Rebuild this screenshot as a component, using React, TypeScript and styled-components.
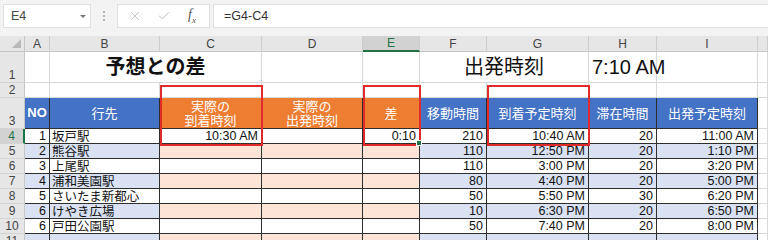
import React from "react";
import styled, { createGlobalStyle, css } from "styled-components";
import { X, Check } from "lucide-react";

const GlobalStyle = createGlobalStyle`
  html, body {
    margin: 0;
    padding: 0;
    background: #fff;
  }
  body {
    font-family: "Liberation Sans", "Noto Sans CJK JP", sans-serif;
    overflow: hidden;
  }
`;

const Window = styled.div`
  width: 768px;
  height: 240px;
  overflow: hidden;
  background: #fff;
`;

const FormulaBar = styled.div`
  display: flex;
  align-items: flex-start;
  height: 36px;
  padding: 4px 0 0 3px;
  box-sizing: border-box;
  background: #f3f3f3;
`;

const NameBox = styled.div`
  width: 88px;
  height: 24px;
  box-sizing: border-box;
  display: flex;
  align-items: center;
  justify-content: space-between;
  padding: 0 4px 0 7px;
  background: #fff;
  border: 1px solid #e0e0e0;
  font-size: 12.5px;
  color: #444;
`;

const Caret = styled.span`
  width: 0;
  height: 0;
  border-left: 3px solid transparent;
  border-right: 3px solid transparent;
  border-top: 3px solid #777;
`;

const Dots = styled.div`
  width: 26px;
  height: 24px;
  display: flex;
  flex-direction: column;
  align-items: center;
  justify-content: center;
  gap: 2px;

  span {
    width: 2px;
    height: 2px;
    background: #b5b5b5;
  }
`;

const FuncBox = styled.div`
  width: 93px;
  height: 24px;
  box-sizing: border-box;
  display: flex;
  align-items: center;
  background: #fff;
  border: 1px solid #e0e0e0;
  padding-left: 10px;
  gap: 15px;
  color: #b8b8b8;
`;

const Fx = styled.span`
  font-family: "Liberation Serif", serif;
  font-style: italic;
  font-size: 14px;
  color: #555;
  margin-left: 2px;

  sub {
    font-size: 9px;
  }
`;

const FormulaInput = styled.div`
  flex: 1;
  height: 24px;
  box-sizing: border-box;
  margin-left: 3px;
  display: flex;
  align-items: center;
  padding-left: 10px;
  background: #fff;
  border: 1px solid #e0e0e0;
  border-right: none;
  font-size: 12.5px;
  color: #333;
`;

const sheetTemplate = css`
  display: grid;
  grid-template-columns: 25px 25px 110px 102px 101px 57px 67px 102px 68px 101px 1fr;
  grid-template-rows: 16px 31px 15px 31px repeat(8, 15px);
`;

const SheetWrap = styled.div`
  position: relative;
`;

const Sheet = styled.div`
  ${sheetTemplate}
`;

const Overlay = styled.div`
  ${sheetTemplate}
  position: absolute;
  inset: 0;
  pointer-events: none;
`;

const Corner = styled.div`
  background: #e6e6e6;
  border-right: 1px solid #c6c6c6;
  border-bottom: 1px solid #c6c6c6;
  display: flex;
  align-items: flex-end;
  justify-content: flex-end;
  padding: 0 3px 3px 0;

  span {
    width: 0;
    height: 0;
    border-left: 9px solid transparent;
    border-bottom: 9px solid #b9b9b9;
  }
`;

const ColHead = styled.div<{ $active?: boolean }>`
  display: flex;
  align-items: center;
  justify-content: center;
  background: ${(p) => (p.$active ? "#d2d2d2" : "#e6e6e6")};
  color: ${(p) => (p.$active ? "#217346" : "#444")};
  border-right: 1px solid #cdcdcd;
  border-bottom: ${(p) => (p.$active ? "2px solid #217346" : "1px solid #c6c6c6")};
  box-sizing: border-box;
  font-size: 12px;
`;

const RowHead = styled.div<{ $active?: boolean }>`
  display: flex;
  align-items: flex-end;
  justify-content: center;
  box-sizing: border-box;
  background: ${(p) => (p.$active ? "#d2d2d2" : "#e6e6e6")};
  color: ${(p) => (p.$active ? "#217346" : "#444")};
  border-right: ${(p) => (p.$active ? "2px solid #217346" : "1px solid #c6c6c6")};
  border-bottom: 1px solid #d4d4d4;
  font-size: 12px;
  line-height: 14px;
`;

const Blank = styled.div<{ $span?: number }>`
  grid-column: span ${(p) => p.$span || 1};
  border-right: 1px solid #d9d9d9;
  border-bottom: 1px solid #d9d9d9;
  box-sizing: border-box;
`;

const Title = styled.div<{ $span?: number; $bold?: boolean; $align?: string }>`
  grid-column: span ${(p) => p.$span || 1};
  display: flex;
  align-items: flex-end;
  justify-content: ${(p) => p.$align || "center"};
  padding: 0 3px 2px;
  border-right: 1px solid #d9d9d9;
  border-bottom: 1px solid #d9d9d9;
  box-sizing: border-box;
  font-family: "Liberation Sans", "Noto Sans CJK JP", sans-serif;
  font-size: 20px;
  font-weight: ${(p) => (p.$bold ? 700 : 400)};
  line-height: 26px;
  color: #111;
  white-space: nowrap;
`;

const TH = styled.div<{ $tone: "blue" | "orange"; $bold?: boolean }>`
  display: flex;
  align-items: center;
  justify-content: center;
  text-align: center;
  background: ${(p) => (p.$tone === "blue" ? "#4472c4" : "#ed7d31")};
  color: #fff;
  border-right: 1px solid #2e2e2e;
  border-bottom: 1px solid #2e2e2e;
  box-sizing: border-box;
  font-family: ${(p) =>
    p.$bold ? '"Liberation Sans", sans-serif' : '"Noto Sans CJK JP", sans-serif'};
  font-size: 13px;
  font-weight: ${(p) => (p.$bold ? 700 : 400)};
  line-height: 14px;
  white-space: pre-line;
`;

const TD = styled.div<{ $bg: string; $align?: "left" | "right" }>`
  display: flex;
  align-items: center;
  justify-content: ${(p) => (p.$align === "left" ? "flex-start" : "flex-end")};
  padding: 0 3px 0 2px;
  background: ${(p) => p.$bg};
  border-right: 1px solid #2e2e2e;
  border-bottom: 1px solid #2e2e2e;
  box-sizing: border-box;
  font-family: ${(p) =>
    p.$align === "left"
      ? '"Noto Sans CJK JP", sans-serif'
      : '"Liberation Sans", "Noto Sans CJK JP", sans-serif'};
  font-size: 12.5px;
  line-height: 14px;
  color: #111;
  white-space: nowrap;
`;

const Highlight = styled.div<{ $col: number }>`
  grid-column: ${(p) => p.$col};
  grid-row: 3 / 6;
  margin: 2px -1px -2px 0;
  border: 2px solid #e12a2a;
`;

const FillHandle = styled.div`
  grid-column: 6;
  grid-row: 5;
  align-self: end;
  justify-self: end;
  width: 4px;
  height: 4px;
  margin: 0 -2px -2px 0;
  background: #217346;
  border: 1px solid #fff;
`;

const cols = ["A", "B", "C", "D", "E", "F", "G", "H", "I", ""];

const headers: { text: string; tone: "blue" | "orange"; bold?: boolean }[] = [
  { text: "NO", tone: "blue", bold: true },
  { text: "行先", tone: "blue" },
  { text: "実際の\n到着時刻", tone: "orange" },
  { text: "実際の\n出発時刻", tone: "orange" },
  { text: "差", tone: "orange" },
  { text: "移動時間", tone: "blue" },
  { text: "到着予定時刻", tone: "blue" },
  { text: "滞在時間", tone: "blue" },
  { text: "出発予定時刻", tone: "blue" },
];

const rows: string[][] = [
  ["1", "坂戸駅", "10:30 AM", "", "0:10", "210", "10:40 AM", "20", "11:00 AM"],
  ["2", "熊谷駅", "", "", "", "110", "12:50 PM", "20", "1:10 PM"],
  ["3", "上尾駅", "", "", "", "110", "3:00 PM", "20", "3:20 PM"],
  ["4", "浦和美園駅", "", "", "", "80", "4:40 PM", "20", "5:00 PM"],
  ["5", "さいたま新都心", "", "", "", "50", "5:50 PM", "30", "6:20 PM"],
  ["6", "けやき広場", "", "", "", "10", "6:30 PM", "20", "6:50 PM"],
  ["6", "戸田公園駅", "", "", "", "50", "7:40 PM", "20", "8:00 PM"],
  ["", "", "", "", "", "", "", "", ""],
];

const cellBg = (rowIndex: number, colIndex: number) => {
  if (rowIndex % 2 === 0) return "#ffffff";
  return colIndex >= 2 && colIndex <= 4 ? "#fce4d6" : "#d9e1f2";
};

const App = () => {
  return (
    <Window>
      <GlobalStyle />
      <FormulaBar>
        <NameBox>
          E4
          <Caret />
        </NameBox>
        <Dots>
          <span />
          <span />
          <span />
        </Dots>
        <FuncBox>
          <X size={14} strokeWidth={1.5} />
          <Check size={14} strokeWidth={1.5} />
          <Fx>
            f<sub>x</sub>
          </Fx>
        </FuncBox>
        <FormulaInput>=G4-C4</FormulaInput>
      </FormulaBar>

      <SheetWrap>
        <Sheet>
          <Corner>
            <span />
          </Corner>
          {cols.map((c, i) => (
            <ColHead key={i} $active={c === "E"}>
              {c}
            </ColHead>
          ))}

          <RowHead>1</RowHead>
          <Blank />
          <Title $span={2} $bold>
            予想との差
          </Title>
          <Blank />
          <Blank />
          <Title $span={2}>出発時刻</Title>
          <Title $align="flex-start">7:10 AM</Title>
          <Blank />
          <Blank />

          <RowHead>2</RowHead>
          {cols.map((_, i) => (
            <Blank key={i} />
          ))}

          <RowHead>3</RowHead>
          {headers.map((h, i) => (
            <TH key={i} $tone={h.tone} $bold={h.bold}>
              {h.text}
            </TH>
          ))}
          <Blank />

          {rows.map((r, ri) => (
            <React.Fragment key={ri}>
              <RowHead $active={ri === 0}>{ri + 4}</RowHead>
              {r.map((v, ci) => (
                <TD key={ci} $bg={cellBg(ri, ci)} $align={ci === 1 ? "left" : "right"}>
                  {v}
                </TD>
              ))}
              <Blank />
            </React.Fragment>
          ))}
        </Sheet>

        <Overlay>
          <Highlight $col={4} />
          <Highlight $col={6} />
          <Highlight $col={8} />
          <FillHandle />
        </Overlay>
      </SheetWrap>
    </Window>
  );
};

export default App;
